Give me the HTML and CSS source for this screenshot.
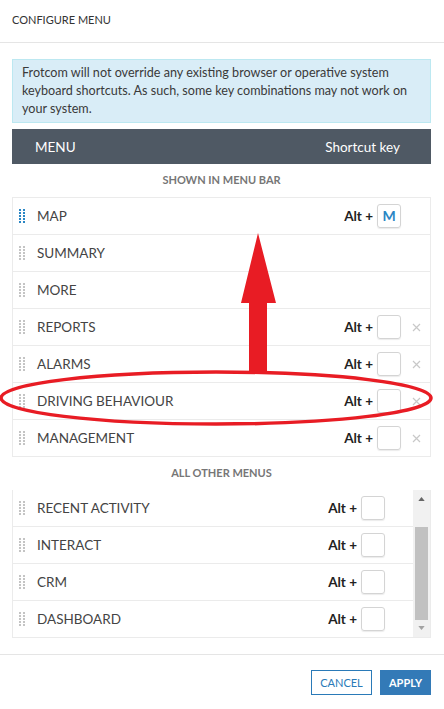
FILE: index.html
```html
<!DOCTYPE html>
<html lang="en">
<head>
    <meta charset="UTF-8">
    <meta name="viewport" content="width=device-width, initial-scale=1.0">
    <title>Configure menu</title>
    <link rel="stylesheet" href="styles.css">
</head>
<body>

    <div class="modal">
        <div class="modal-header">CONFIGURE MENU</div>

        <div class="modal-body">
            <div class="info-box">
                Frotcom will not override any existing browser or operative system keyboard shortcuts. As such, some key combinations may not work on your system.
            </div>

            <div class="table-head">
                <span>MENU</span>
                <span>Shortcut key</span>
            </div>

            <div class="section-title">SHOWN IN MENU BAR</div>

            <!-- Menu bar items -->
            <div class="menu-list">
                <div class="menu-row">
                    <svg class="handle active" viewBox="0 0 7 14"><path d="M0 0h2v2H0zM4 0h2v2H4zM0 3h2v2H0zM4 3h2v2H4zM0 6h2v2H0zM4 6h2v2H4zM0 9h2v2H0zM4 9h2v2H4zM0 12h2v2H0zM4 12h2v2H4z"/></svg>
                    <span class="label">MAP</span>
                    <span class="alt">Alt +</span>
                    <span class="key filled">M</span>
                    <span class="remove-spacer"></span>
                </div>
                <div class="menu-row">
                    <svg class="handle" viewBox="0 0 7 14"><path d="M0 0h2v2H0zM4 0h2v2H4zM0 3h2v2H0zM4 3h2v2H4zM0 6h2v2H0zM4 6h2v2H4zM0 9h2v2H0zM4 9h2v2H4zM0 12h2v2H0zM4 12h2v2H4z"/></svg>
                    <span class="label">SUMMARY</span>
                </div>
                <div class="menu-row">
                    <svg class="handle" viewBox="0 0 7 14"><path d="M0 0h2v2H0zM4 0h2v2H4zM0 3h2v2H0zM4 3h2v2H4zM0 6h2v2H0zM4 6h2v2H4zM0 9h2v2H0zM4 9h2v2H4zM0 12h2v2H0zM4 12h2v2H4z"/></svg>
                    <span class="label">MORE</span>
                </div>
                <div class="menu-row">
                    <svg class="handle" viewBox="0 0 7 14"><path d="M0 0h2v2H0zM4 0h2v2H4zM0 3h2v2H0zM4 3h2v2H4zM0 6h2v2H0zM4 6h2v2H4zM0 9h2v2H0zM4 9h2v2H4zM0 12h2v2H0zM4 12h2v2H4z"/></svg>
                    <span class="label">REPORTS</span>
                    <span class="alt">Alt +</span>
                    <span class="key"></span>
                    <svg class="remove" viewBox="0 0 9 9"><path d="M1 1l7 7M8 1L1 8"/></svg>
                </div>
                <div class="menu-row">
                    <svg class="handle" viewBox="0 0 7 14"><path d="M0 0h2v2H0zM4 0h2v2H4zM0 3h2v2H0zM4 3h2v2H4zM0 6h2v2H0zM4 6h2v2H4zM0 9h2v2H0zM4 9h2v2H4zM0 12h2v2H0zM4 12h2v2H4z"/></svg>
                    <span class="label">ALARMS</span>
                    <span class="alt">Alt +</span>
                    <span class="key"></span>
                    <svg class="remove" viewBox="0 0 9 9"><path d="M1 1l7 7M8 1L1 8"/></svg>
                </div>
                <div class="menu-row">
                    <svg class="handle" viewBox="0 0 7 14"><path d="M0 0h2v2H0zM4 0h2v2H4zM0 3h2v2H0zM4 3h2v2H4zM0 6h2v2H0zM4 6h2v2H4zM0 9h2v2H0zM4 9h2v2H4zM0 12h2v2H0zM4 12h2v2H4z"/></svg>
                    <span class="label">DRIVING BEHAVIOUR</span>
                    <span class="alt">Alt +</span>
                    <span class="key"></span>
                    <svg class="remove" viewBox="0 0 9 9"><path d="M1 1l7 7M8 1L1 8"/></svg>
                </div>
                <div class="menu-row">
                    <svg class="handle" viewBox="0 0 7 14"><path d="M0 0h2v2H0zM4 0h2v2H4zM0 3h2v2H0zM4 3h2v2H4zM0 6h2v2H0zM4 6h2v2H4zM0 9h2v2H0zM4 9h2v2H4zM0 12h2v2H0zM4 12h2v2H4z"/></svg>
                    <span class="label">MANAGEMENT</span>
                    <span class="alt">Alt +</span>
                    <span class="key"></span>
                    <svg class="remove" viewBox="0 0 9 9"><path d="M1 1l7 7M8 1L1 8"/></svg>
                </div>
            </div>

            <div class="section-title">ALL OTHER MENUS</div>

            <div class="menu-list other">
                <div class="other-rows">
                    <div class="menu-row">
                        <svg class="handle" viewBox="0 0 7 14"><path d="M0 0h2v2H0zM4 0h2v2H4zM0 3h2v2H0zM4 3h2v2H4zM0 6h2v2H0zM4 6h2v2H4zM0 9h2v2H0zM4 9h2v2H4zM0 12h2v2H0zM4 12h2v2H4z"/></svg>
                        <span class="label">RECENT ACTIVITY</span>
                        <span class="alt">Alt +</span>
                        <span class="key"></span>
                    </div>
                    <div class="menu-row">
                        <svg class="handle" viewBox="0 0 7 14"><path d="M0 0h2v2H0zM4 0h2v2H4zM0 3h2v2H0zM4 3h2v2H4zM0 6h2v2H0zM4 6h2v2H4zM0 9h2v2H0zM4 9h2v2H4zM0 12h2v2H0zM4 12h2v2H4z"/></svg>
                        <span class="label">INTERACT</span>
                        <span class="alt">Alt +</span>
                        <span class="key"></span>
                    </div>
                    <div class="menu-row">
                        <svg class="handle" viewBox="0 0 7 14"><path d="M0 0h2v2H0zM4 0h2v2H4zM0 3h2v2H0zM4 3h2v2H4zM0 6h2v2H0zM4 6h2v2H4zM0 9h2v2H0zM4 9h2v2H4zM0 12h2v2H0zM4 12h2v2H4z"/></svg>
                        <span class="label">CRM</span>
                        <span class="alt">Alt +</span>
                        <span class="key"></span>
                    </div>
                    <div class="menu-row">
                        <svg class="handle" viewBox="0 0 7 14"><path d="M0 0h2v2H0zM4 0h2v2H4zM0 3h2v2H0zM4 3h2v2H4zM0 6h2v2H0zM4 6h2v2H4zM0 9h2v2H0zM4 9h2v2H4zM0 12h2v2H0zM4 12h2v2H4z"/></svg>
                        <span class="label">DASHBOARD</span>
                        <span class="alt">Alt +</span>
                        <span class="key"></span>
                    </div>
                </div>
                <div class="scrollbar">
                    <svg class="scroll-arrow" viewBox="0 0 8 5"><path d="M0 5L4 0l4 5z"/></svg>
                    <div class="scroll-track">
                        <div class="scroll-thumb"></div>
                    </div>
                    <svg class="scroll-arrow down" viewBox="0 0 8 5"><path d="M0 0h8L4 5z"/></svg>
                </div>
            </div>
        </div>

        <div class="modal-footer">
            <button class="btn btn-cancel">CANCEL</button>
            <button class="btn btn-apply">APPLY</button>
        </div>
    </div>

    <!-- red annotation drawn over the screenshot -->
    <svg class="annotation" viewBox="0 0 444 709">
        <path d="M258 233 L276 303 L267 303 L267 372 L249 372 L249 303 L241 303 Z" fill="#e81c24"/>
        <ellipse cx="216" cy="398" rx="215" ry="26" fill="none" stroke="#e81c24" stroke-width="3.5"/>
    </svg>

</body>
</html>
```

FILE: styles.css
```css
body {
    margin: 0;
    padding: 0;
    background: #ffffff;
    font-family: 'Lato', 'Open Sans', sans-serif;
    color: #444;
    position: relative;
}

.modal {
    width: 444px;
}

.modal-header {
    height: 42px;
    line-height: 40px;
    padding-left: 12px;
    font-size: 11px;
    color: #333;
    border-bottom: 1px solid #e5e5e5;
}

.modal-body {
    padding: 16px 13px 0 12px;
}

.info-box {
    background-color: #d9edf7;
    border: 1px solid #bce8f1;
    padding: 4px 9px 4px 9px;
    font-size: 12.6px;
    line-height: 18px;
    color: #3a3a3a;
}

.table-head {
    margin-top: 6px;
    height: 35px;
    background-color: #4f5964;
    color: #fff;
    font-size: 13.5px;
    display: flex;
    justify-content: space-between;
    align-items: center;
    padding: 0 31px 0 23px;
}

.section-title {
    height: 33px;
    line-height: 32px;
    text-align: center;
    font-size: 11px;
    font-weight: bold;
    color: #767676;
}

.menu-list {
    border: 1px solid #ebebeb;
    border-top: none;
}

.menu-row {
    height: 36px;
    border-top: 1px solid #ebebeb;
    display: flex;
    align-items: center;
    padding-left: 6px;
}

.handle {
    width: 7px;
    height: 14px;
    fill: #c4c4c4;
    margin-right: 11px;
}

.handle.active {
    fill: #2a86c4;
}

.label {
    font-size: 13.5px;
    color: #444;
    flex: 1;
}

.alt {
    font-size: 13.5px;
    font-weight: bold;
    color: #222;
    margin-right: 4px;
}

.key {
    width: 22px;
    height: 22px;
    border: 1px solid #d4d4d4;
    border-radius: 3px;
    box-shadow: 0 1px 1px rgba(0, 0, 0, 0.08);
    text-align: center;
    line-height: 22px;
    font-size: 14px;
    font-weight: bold;
    color: #2a86c4;
}

.remove {
    width: 9px;
    height: 9px;
    stroke: #c8c8c8;
    stroke-width: 1.2;
    margin: 0 9px 0 11px;
}

.remove-spacer {
    width: 29px;
}

.menu-list.other {
    display: flex;
}

.other-rows {
    flex: 1;
}

.other .menu-row:first-child {
    border-top: none;
}

.other .key {
    margin-right: 28px;
}

.scrollbar {
    width: 17px;
    background: #f1f1f1;
    display: flex;
    flex-direction: column;
    align-items: center;
}

.scroll-arrow {
    width: 7px;
    height: 4px;
    fill: #666;
    margin: 7px 0 5px;
}

.scroll-arrow.down {
    fill: #a3a3a3;
    margin: 6px 0 7px;
}

.scroll-track {
    flex: 1;
    width: 13px;
    display: flex;
    flex-direction: column;
    justify-content: flex-end;
}

.scroll-thumb {
    height: 93px;
    background: #c1c1c1;
}

.modal-footer {
    margin-top: 16px;
    border-top: 1px solid #e5e5e5;
    padding: 15px 13px 0 0;
    display: flex;
    justify-content: flex-end;
    gap: 8px;
}

.btn {
    height: 25px;
    font-family: 'Lato', 'Open Sans', sans-serif;
    font-size: 11px;
    border-radius: 0;
    cursor: pointer;
    padding: 0;
}

.btn-cancel {
    width: 61px;
    background: #fff;
    border: 1px solid #2a7ab8;
    color: #2a7ab8;
}

.btn-apply {
    width: 51px;
    background: #337ab7;
    border: 1px solid #337ab7;
    color: #fff;
    font-weight: bold;
}

.annotation {
    position: absolute;
    left: 0;
    top: 0;
    width: 444px;
    height: 709px;
    pointer-events: none;
}
```
